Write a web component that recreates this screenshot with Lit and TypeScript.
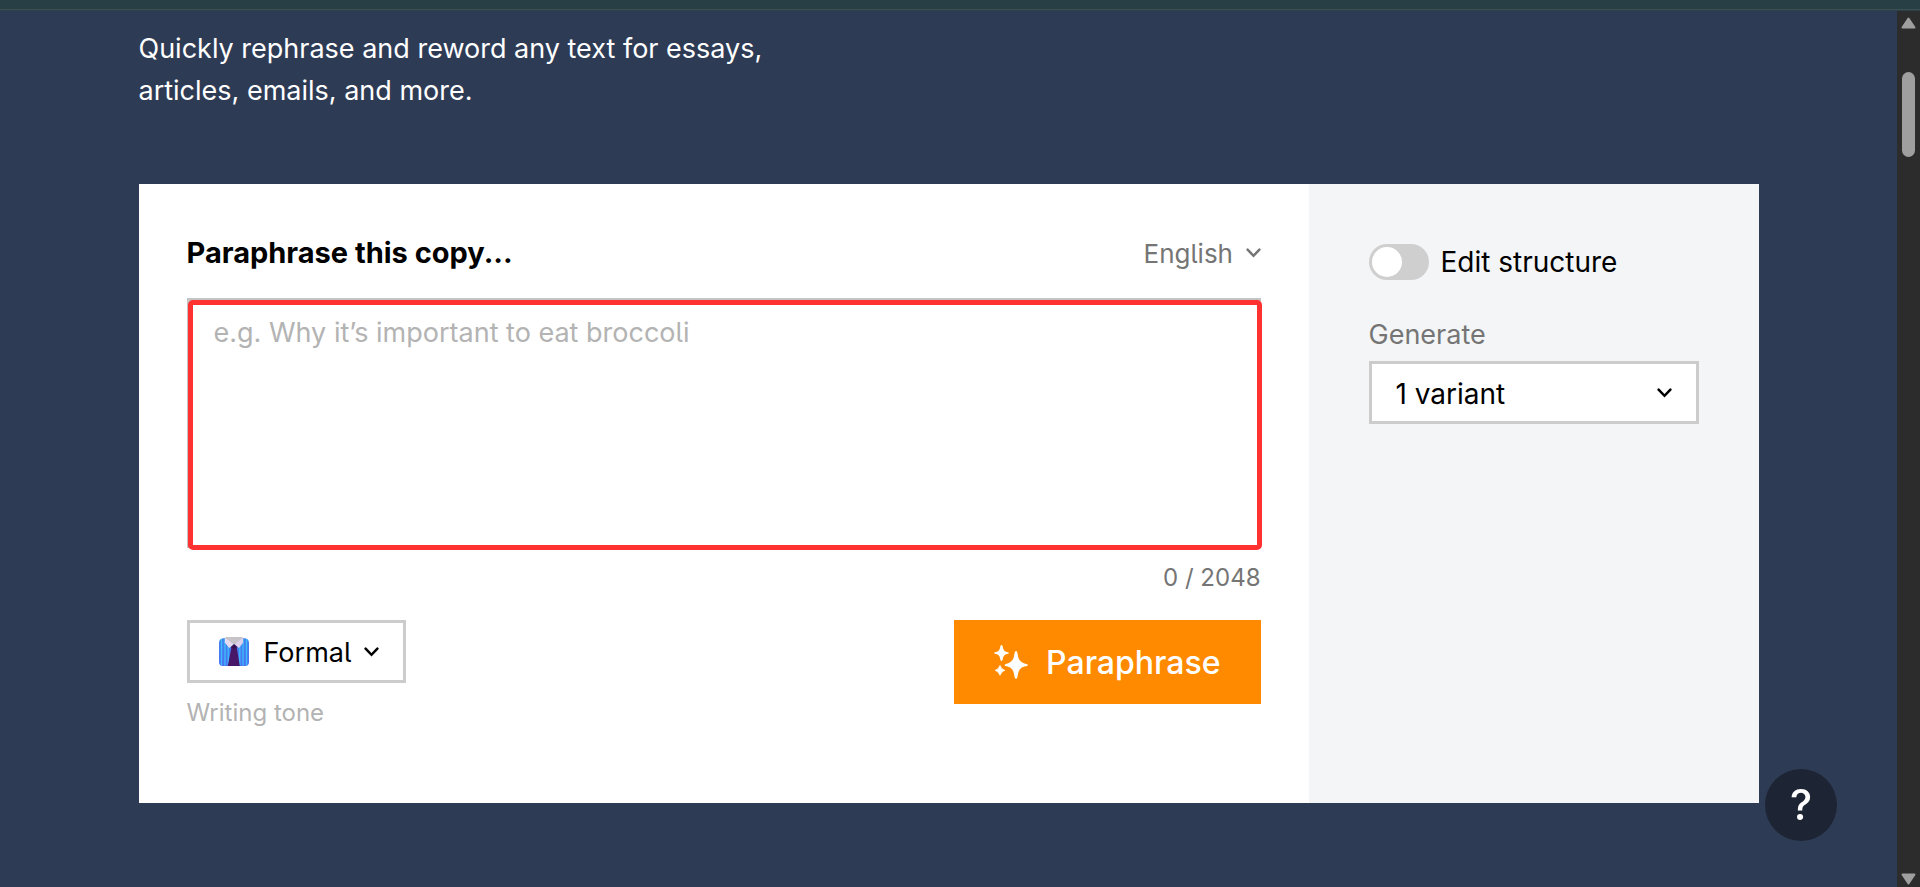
import { LitElement, html, css, svg } from "lit";
import { customElement, state } from "lit/decorators.js";

const chevron = html`<svg class="chevron" viewBox="0 0 15 10" aria-hidden="true">
  <path d="M1.6 1.6 7.5 7.8 13.4 1.6" fill="none" stroke="currentColor" stroke-width="2.5" stroke-linecap="round" />
</svg>`;

const stripes = [2.5, 6, 9.2, 20.8, 24, 27.5];

const necktie = html`<svg class="necktie" viewBox="0 0 30 29" aria-hidden="true">
  <defs>
    <linearGradient id="shirt" x1="0" y1="0" x2="0" y2="1">
      <stop offset="0" stop-color="#3f86ee" />
      <stop offset="1" stop-color="#4a72f2" />
    </linearGradient>
  </defs>
  <path d="M4 1.2H26Q30 2 30 6V25Q30 29 26 29H4Q0 29 0 25V6Q0 2 4 1.2Z" fill="url(#shirt)" />
  ${stripes.map((x) => svg`<path d="M${x} 2V28.5" stroke="#3fbdfb" stroke-width="1.3" />`)}
  <path d="M6 0H24L19 7H11Z" fill="#c6c3c9" />
  <path d="M12.6 8.5H17.4L20.8 29H8.8L12 13Z" fill="#471868" />
  <path d="M13 8 15 7.2 17.4 8 18 10.2 15.2 12 12 10.4Z" fill="#38104f" />
  <path d="M6 0.5 14.6 7.4 10.2 11 5.8 5.6Z" fill="#e6daf0" />
  <path d="M24 0.5 15.6 7.4 20 11 24.2 5.6Z" fill="#dfd0ec" />
</svg>`;

const sparkles = html`<svg class="sparkles" viewBox="0 0 34 34" aria-hidden="true">
  <path fill="currentColor" d="M7.5 0 Q8.6 0 8.8 2 Q9.4 6.3 13 7 Q15 7.3 15 8 Q15 8.7 13 9 Q9.4 9.7 8.8 14 Q8.6 16 7.5 16 Q6.4 16 6.2 14 Q5.6 9.7 2 9 Q0 8.7 0 8 Q0 7.3 2 7 Q5.6 6.3 6.2 2 Q6.4 0 7.5 0Z" />
  <path fill="currentColor" d="M22 6 Q23.4 6 23.6 9 Q24.4 17 30.5 18.4 Q34 19 34 20 Q34 21 30.5 21.6 Q24.4 23 23.6 31 Q23.4 34 22 34 Q20.6 34 20.4 31 Q19.6 23 13.5 21.6 Q10.5 21 10.5 20 Q10.5 19 13.5 18.4 Q19.6 17 20.4 9 Q20.6 6 22 6Z" />
  <path fill="currentColor" d="M6 20.5Q7.4 24.6 10.8 25.3Q7.4 26.4 6 30.3Q4.6 26.4 1.2 25.3Q4.6 24.6 6 20.5Z" stroke="currentColor" stroke-width="0.8" stroke-linejoin="round" />
</svg>`;

@customElement("app-root")
export class AppRoot extends LitElement {
  static styles = css`
    :host {
      display: flex;
      flex-direction: column;
      min-height: 100vh;
      background: #2e3b55;
      font-family: Inter, "Noto Sans", sans-serif;
      color: #000;
    }
    *,
    *::before,
    *::after {
      box-sizing: border-box;
    }
    .topbar {
      height: 11px;
      background: linear-gradient(#284045 0 9px, #3b504f 9px 10px, #2b3f4c 10px);
    }
    .body {
      flex: 1;
      display: flex;
    }
    .page {
      flex: 1;
      min-width: 0;
      padding: 17px 24px 24px;
    }
    .wrap {
      max-width: 1620px;
      margin: 0 auto;
    }
    .intro {
      max-width: 650px;
      margin: 0 0 72px;
      font-size: 27px;
      line-height: 42px;
      color: #fff;
    }
    .card {
      display: grid;
      grid-template-columns: minmax(0, 13fr) minmax(0, 5fr);
      background: #fff;
      font-feature-settings: "cv05";
    }
    .editor {
      padding: 48px 48px 74px;
    }
    .head {
      display: flex;
      align-items: center;
      justify-content: space-between;
      margin-bottom: 24px;
    }
    .title {
      font-size: 29px;
      line-height: 42px;
      font-weight: 700;
    }
    select,
    button,
    textarea,
    input {
      font: inherit;
      font-feature-settings: inherit;
      color: inherit;
      margin: 0;
    }
    select {
      appearance: none;
      background: transparent;
      border: 0;
      border-radius: 0;
      padding: 2px 0 0;
      font-size: 27px;
      line-height: 36px;
      width: 100%;
      grid-area: 1 / 1;
    }
    .picker {
      display: grid;
      align-items: center;
    }
    .picker svg {
      grid-area: 1 / 1;
      pointer-events: none;
    }
    .chevron {
      display: block;
      width: 15px;
      height: 10px;
      justify-self: end;
    }
    .language {
      color: #757575;
    }
    .language select {
      padding-right: 27px;
      font-size: 26px;
    }
    .boxed {
      height: 63px;
      border: 3px solid #ccc;
      background: #fff;
    }
    .boxed select {
      height: 57px;
    }
    .tone {
      width: 219px;
    }
    .tone select {
      padding-left: 74px;
    }
    .tone .chevron {
      margin-right: 24px;
    }
    .necktie {
      width: 30px;
      height: 29px;
      margin-left: 29px;
    }
    .field {
      position: relative;
      margin-bottom: 14px;
    }
    textarea {
      display: block;
      width: 100%;
      height: 250px;
      padding: 14px 24px;
      border: 3px solid #c4c4c4;
      border-radius: 0;
      outline: 0;
      resize: none;
      font-size: 27px;
      line-height: 36px;
    }
    textarea::placeholder {
      color: #b3b3b3;
      opacity: 1;
    }
    /* Highlight frame, drawn over the text box and shifted down-right of it */
    .field::after {
      content: "";
      position: absolute;
      inset: 2px -1px -2px 1px;
      border: 5px solid #ff3131;
      border-radius: 5px;
      pointer-events: none;
    }
    .counter {
      margin-bottom: 26px;
      font-size: 24px;
      line-height: 32px;
      text-align: right;
      color: #757575;
    }
    .actions {
      display: flex;
      align-items: flex-start;
      justify-content: space-between;
    }
    .caption {
      display: block;
      margin-top: 14px;
      font-size: 24px;
      line-height: 32px;
      color: #b3b3b3;
    }
    .submit {
      display: flex;
      align-items: center;
      gap: 18px;
      height: 84px;
      padding: 0 40px;
      border: 0;
      background: #ff8a00;
      color: #fff;
      font-size: 32px;
      font-weight: 500;
    }
    .sparkles {
      width: 34px;
      height: 34px;
    }
    .side {
      padding: 60px;
      background: #f3f5f7;
    }
    .toggle {
      display: flex;
      align-items: center;
      gap: 12px;
      margin-bottom: 37px;
      font-size: 28px;
      line-height: 36px;
    }
    .toggle input {
      appearance: none;
      display: flex;
      width: 60px;
      height: 36px;
      padding: 3px;
      border-radius: 18px;
      background: #cfcfcf;
    }
    .toggle input::before {
      content: "";
      width: 30px;
      height: 30px;
      border-radius: 50%;
      background: #fff;
    }
    .toggle input:checked {
      justify-content: flex-end;
      background: #ff8a00;
    }
    .label {
      display: block;
      margin-bottom: 8px;
      font-size: 27px;
      line-height: 36px;
      color: #757575;
    }
    .variants select {
      padding-left: 24px;
      font-size: 28px;
    }
    .variants .chevron {
      margin-right: 24px;
    }
    .scrollbar {
      display: flex;
      flex-direction: column;
      align-items: center;
      width: 23px;
      padding: 6px 0 2px;
      background: #2c2c2c;
    }
    .arrow {
      width: 15px;
      height: 12px;
      fill: #9f9f9f;
      stroke: #9f9f9f;
      stroke-width: 2;
      stroke-linejoin: round;
    }
    .thumb {
      width: 13px;
      height: 85px;
      margin: 43px 0 auto;
      border-radius: 7px;
      background: #9f9f9f;
    }
    .help {
      position: fixed;
      right: 83px;
      bottom: 46px;
      width: 72px;
      height: 72px;
      padding: 0;
      border: 0;
      border-radius: 50%;
      background: #1d2433;
      color: #fff;
      font-size: 42px;
      line-height: 72px;
      font-weight: 500;
    }
  `;

  @state() private text = "";

  private onInput(e: Event) {
    this.text = (e.target as HTMLTextAreaElement).value;
  }

  render() {
    return html`
      <div class="topbar"></div>
      <div class="body">
        <main class="page">
          <div class="wrap">
            <p class="intro">Quickly rephrase and reword any text for essays, articles, emails, and more.</p>
            <div class="card">
              <section class="editor">
                <div class="head">
                  <label class="title" for="copy">Paraphrase this copy...</label>
                  <div class="picker language">
                    <select aria-label="Language"><option>English</option></select>
                    ${chevron}
                  </div>
                </div>
                <div class="field">
                  <textarea id="copy" maxlength="2048" placeholder="e.g. Why it’s important to eat broccoli" @input=${this.onInput}></textarea>
                </div>
                <div class="counter">${this.text.length} / 2048</div>
                <div class="actions">
                  <div>
                    <div class="picker boxed tone">
                      <select id="tone"><option>Formal</option></select>
                      ${necktie}${chevron}
                    </div>
                    <label class="caption" for="tone">Writing tone</label>
                  </div>
                  <button class="submit" type="button">${sparkles}<span>Paraphrase</span></button>
                </div>
              </section>
              <aside class="side">
                <label class="toggle"><input type="checkbox" role="switch" />Edit structure</label>
                <label class="label" for="variants">Generate</label>
                <div class="picker boxed variants">
                  <select id="variants"><option>1 variant</option></select>
                  ${chevron}
                </div>
              </aside>
            </div>
          </div>
        </main>
        <div class="scrollbar" aria-hidden="true">
          <svg class="arrow" viewBox="0 0 15 12"><path d="M7.5 1.5 13.5 10.5H1.5Z" /></svg>
          <div class="thumb"></div>
          <svg class="arrow" viewBox="0 0 15 12"><path d="M7.5 10.5 13.5 1.5H1.5Z" /></svg>
        </div>
      </div>
      <button class="help" type="button" aria-label="Help">?</button>
    `;
  }
}
